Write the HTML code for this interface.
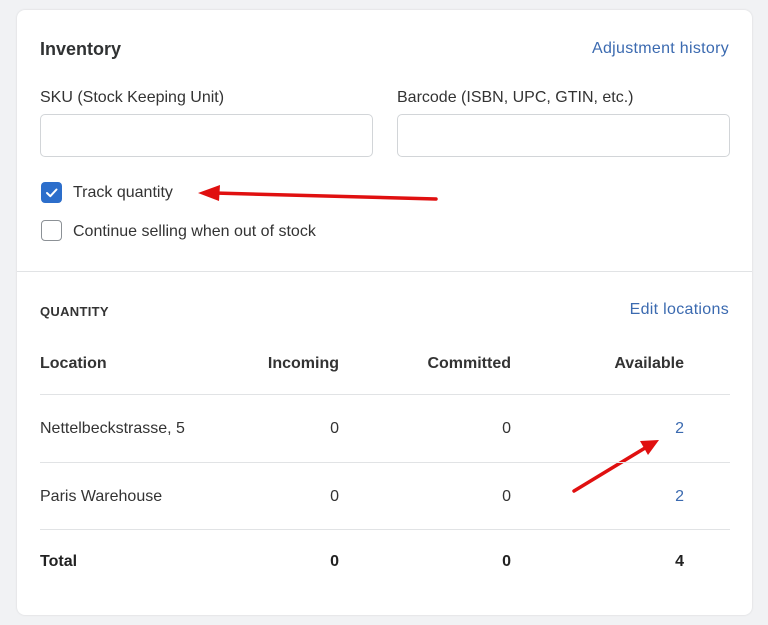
<!DOCTYPE html>
<html><head><style>
body{margin:0;width:768px;height:625px;background:#f1f2f4;font-family:"Liberation Sans",sans-serif;color:#202223;position:relative;overflow:hidden}
.card{position:absolute;left:17px;top:10px;width:735px;height:605px;background:#fff;border-radius:8px;box-shadow:0 0 2px rgba(0,0,0,.12)}
.t{position:absolute;white-space:nowrap;line-height:1}
.in{position:absolute;border:1px solid #d2d5d8;border-radius:5px;box-sizing:border-box;background:#fff}
.line{position:absolute;height:1px;background:#e1e3e5}
.r{text-align:right}
.blue{color:#3b6ab0}
</style></head><body>
<div class="card"></div>
<div class="t" style="left:40px;top:40px;font-size:18px;font-weight:bold;color:#303233">Inventory</div>
<div class="t blue r" style="left:500px;width:229px;top:41px;font-size:16px;letter-spacing:.3px">Adjustment history</div>
<div class="t" style="left:40px;top:90px;font-size:16px;color:#333">SKU (Stock Keeping Unit)</div>
<div class="t" style="left:397px;top:90px;font-size:16px;color:#333">Barcode (ISBN, UPC, GTIN, etc.)</div>
<div class="in" style="left:40px;top:114px;width:333px;height:43px"></div>
<div class="in" style="left:397px;top:114px;width:333px;height:43px"></div>
<div style="position:absolute;left:41px;top:182px;width:21px;height:21px;background:#2c6ecb;border-radius:4px"></div>
<svg style="position:absolute;left:41px;top:182px" width="21" height="21"><path d="M6 11l3.3 3.2L15.5 7.5" stroke="#fff" stroke-width="2" fill="none" stroke-linecap="round" stroke-linejoin="round"/></svg>
<div class="t" style="left:73px;top:185px;font-size:16px;color:#333">Track quantity</div>
<div style="position:absolute;left:41px;top:220px;width:21px;height:21px;border:1.5px solid #8c9196;border-radius:4px;box-sizing:border-box"></div>
<div class="t" style="left:73px;top:224px;font-size:16px;color:#333">Continue selling when out of stock</div>
<svg style="position:absolute;left:0;top:0" width="768" height="625"><path d="M214 193L436 199" stroke="#e01010" stroke-width="3.5" stroke-linecap="round"/><path d="M198 193L220 185L219 201Z" fill="#e01010"/><path d="M574 491L645 448" stroke="#e01010" stroke-width="3.5" stroke-linecap="round"/><path d="M659 440L640 441L648 455Z" fill="#e01010"/></svg>
<div class="line" style="left:17px;top:271px;width:735px"></div>
<div class="t" style="left:40px;top:305px;font-size:13px;font-weight:bold;color:#333;letter-spacing:.3px">QUANTITY</div>
<div class="t blue r" style="left:560px;width:169px;top:302px;font-size:16px;letter-spacing:.3px">Edit locations</div>
<div class="t" style="left:40px;top:356px;font-size:16px;font-weight:bold;color:#333">Location</div>
<div class="t r" style="left:200px;width:139px;top:356px;font-size:16px;font-weight:bold;color:#333">Incoming</div>
<div class="t r" style="left:380px;width:131px;top:356px;font-size:16px;font-weight:bold;color:#333">Committed</div>
<div class="t r" style="left:550px;width:134px;top:356px;font-size:16px;font-weight:bold;color:#333">Available</div>
<div class="line" style="left:40px;top:394px;width:690px"></div>
<div class="t" style="left:40px;top:421px;font-size:16px;color:#333">Nettelbeckstrasse, 5</div>
<div class="t r" style="left:200px;width:139px;top:421px;font-size:16px;color:#333">0</div>
<div class="t r" style="left:380px;width:131px;top:421px;font-size:16px;color:#333">0</div>
<div class="t r blue" style="left:550px;width:134px;top:421px;font-size:16px">2</div>
<div class="line" style="left:40px;top:462px;width:690px"></div>
<div class="t" style="left:40px;top:489px;font-size:16px;color:#333">Paris Warehouse</div>
<div class="t r" style="left:200px;width:139px;top:489px;font-size:16px;color:#333">0</div>
<div class="t r" style="left:380px;width:131px;top:489px;font-size:16px;color:#333">0</div>
<div class="t r blue" style="left:550px;width:134px;top:489px;font-size:16px">2</div>
<div class="line" style="left:40px;top:529px;width:690px"></div>
<div class="t" style="left:40px;top:554px;font-size:16px;font-weight:bold;color:#222">Total</div>
<div class="t r" style="left:200px;width:139px;top:554px;font-size:16px;font-weight:bold;color:#222">0</div>
<div class="t r" style="left:380px;width:131px;top:554px;font-size:16px;font-weight:bold;color:#222">0</div>
<div class="t r" style="left:550px;width:134px;top:554px;font-size:16px;font-weight:bold;color:#222">4</div>
</body></html>
